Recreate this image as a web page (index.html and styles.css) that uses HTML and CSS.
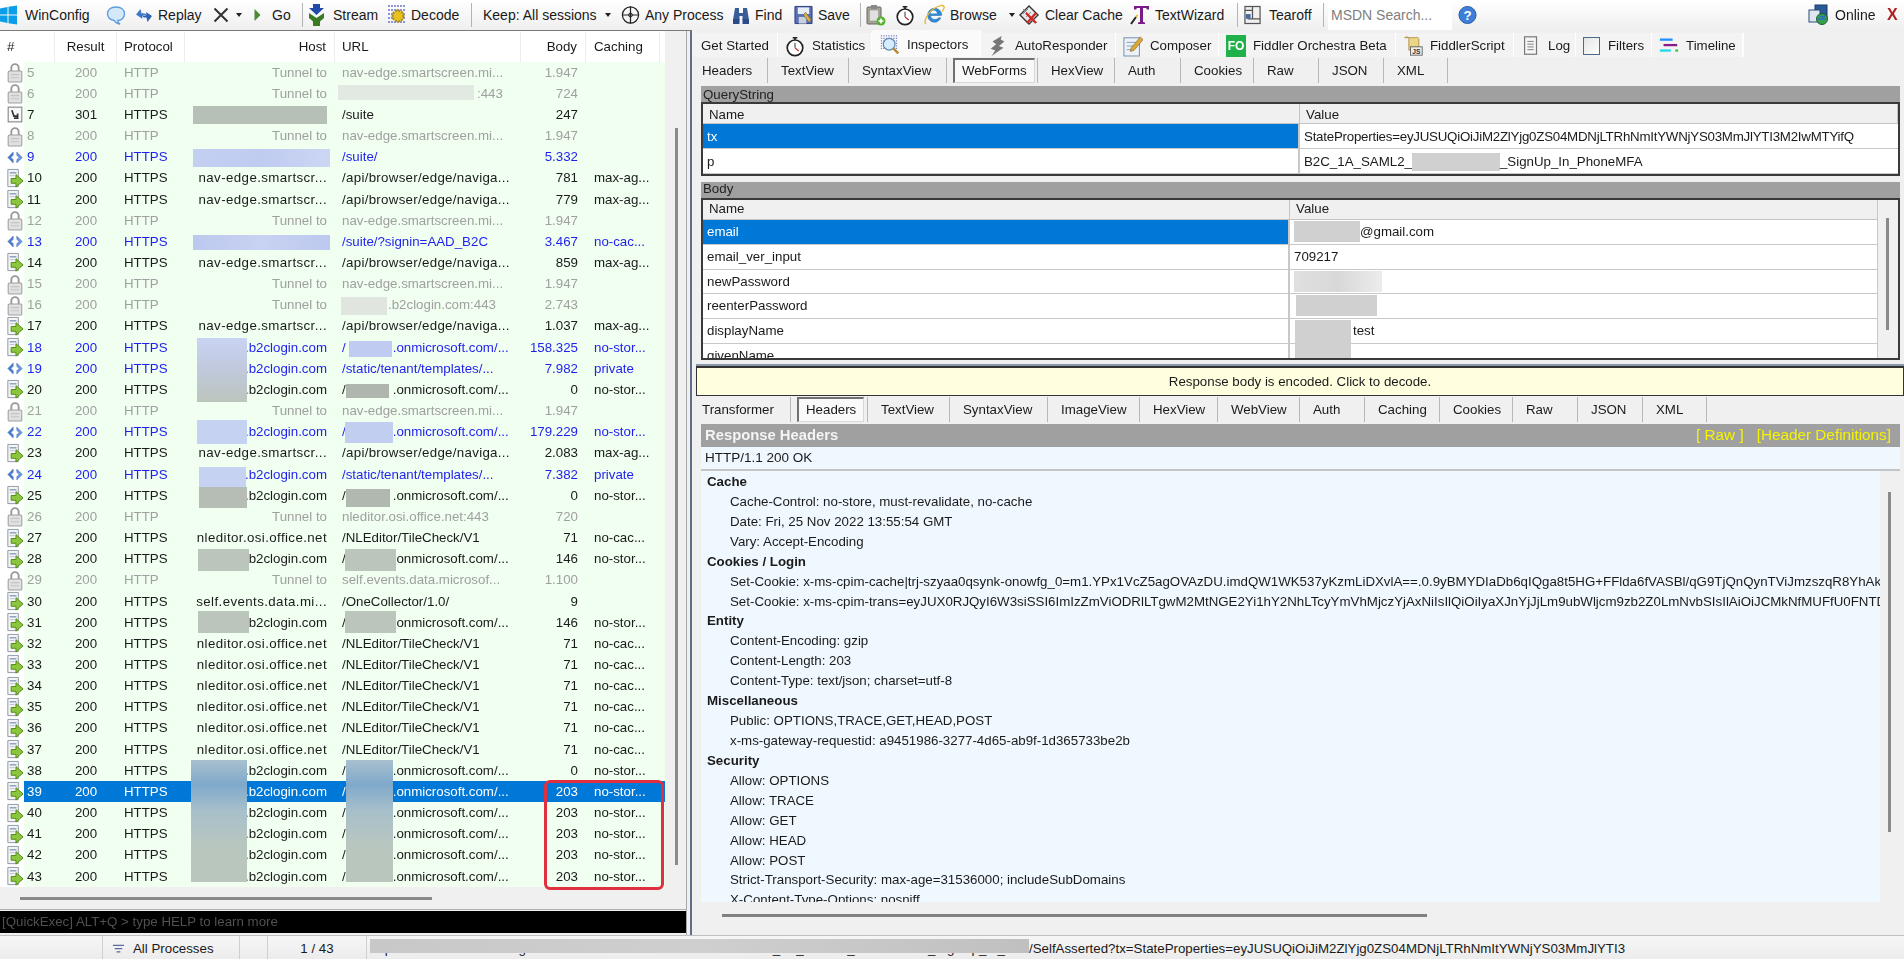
FILE: index.html
```html
<!DOCTYPE html>
<html lang="en">
<head>
<meta charset="utf-8">
<title>Fiddler</title>
<link rel="stylesheet" href="styles.css">
</head>
<body>
<svg class="defs" aria-hidden="true">
  <symbol id="lock" viewBox="0 0 16 20"><path d="M4.500 9V5.500a3.500 3.500 0 0 1 7 0V9" fill="none" stroke="#9a9a9a" stroke-width="1.800"/><rect x="1.500" y="8.500" width="13" height="10.500" rx="1" fill="#e0e0e0" stroke="#a0a0a0"/><path d="M4 12h8M4 15h8" stroke="#c4c4c4"/></symbol>
  <symbol id="js" viewBox="0 0 18 22"><path d="M1.500 1.500h11v18h-11z" fill="#f4f4f4" stroke="#8e98a4"/><path d="M3.500 5h7" stroke="#8aa0c0" stroke-width="1.500"/><path d="M3.500 8h5" stroke="#b8c0cc"/><path d="M5 11h5V7l7.500 6.500L10 20v-4H5z" fill="#8cc63f" stroke="#4f8a10"/></symbol>
  <symbol id="html" viewBox="0 0 20 14"><path d="M8 1 2 7l6 6V9.500L5.500 7 8 4.500z" fill="#4d7ed0" stroke="#2f5ca8" stroke-width=".5"/><path d="M12 1l6 6-6 6V9.500L14.500 7 12 4.500z" fill="#6d9ade" stroke="#2f5ca8" stroke-width=".5"/></symbol>
  <symbol id="redir" viewBox="0 0 16 20"><rect x="1.500" y="3" width="13" height="14" fill="#f8f8f8" stroke="#808080"/><path d="M5 6l2 5.500h3M10.500 9v4.500H7" fill="none" stroke="#333" stroke-width="1.600"/></symbol>
  <symbol id="timer" viewBox="0 0 20 24"><circle cx="10" cy="14" r="8.500" fill="#fff" stroke="#222" stroke-width="1.800"/><path d="M7.500 3h5M10 3v2.500" stroke="#222" stroke-width="1.800"/><path d="M10 14V8.500" stroke="#222"/><path d="M10 14l4 3.500" stroke="#d02020" stroke-width="1.300"/></symbol>
</svg>

<header class="toolbar">
  <div class="tool"><svg class="ic w17" viewBox="0 0 17 20"><path d="M0 3.500 7.500 2v7.500H0zM8.500 1.800 17 .5v9H8.500zM0 10.500h7.500V18L0 16.500zM8.500 10.500H17v9L8.500 18.200z" fill="#0a9ee8"/></svg><span>WinConfig</span></div>
  <div class="tool"><svg class="ic w20" viewBox="0 0 20 22"><path d="M10 3c5 0 8.500 2.700 8.500 6.800s-3.300 6.700-6.800 6.700c.3 1.600 1.300 2.800 2.300 3.500-2.800-.3-4.800-1.700-5.700-3.500C4.300 15.800 1.500 13.300 1.500 9.800 1.500 5.700 5 3 10 3z" fill="#d5e8fa" stroke="#5a9be0" stroke-width="1.300"/></svg></div>
  <div class="tool"><svg class="ic w18" viewBox="0 0 18 20"><path d="M1 9.500 5.500 4l1 4.500C9 8 11 8.500 12 10.500 10 9.800 8.500 10 7 11l.5 3z" fill="#3f78c8"/><path d="M17 11l-4.500 6-1-4.500C9 12.800 7.500 12 6.500 10.200c1.800.7 3.500.6 5-.4L11 7z" fill="#2c64b4"/></svg><span>Replay</span></div>
  <div class="tool"><svg class="ic w16" viewBox="0 0 16 18"><path d="M1.500 2.500l13 13M14.500 2.500l-13 13" stroke="#333" stroke-width="2"/></svg><i class="caret"></i></div>
  <div class="tool"><svg class="ic go" viewBox="0 0 7 14"><path d="M.5 1v12L6.500 7z" fill="#4c8a38"/></svg><span class="go-t">Go</span></div>
  <div class="tsep"></div>
  <div class="tool"><svg class="ic w17" viewBox="0 0 17 22"><path d="M5 0h7v4h4l-7.500 7L1 4h4z" fill="#1f4aa8"/><path d="M1 9l7.500 5 7.500-5v5l-4 3.500V22H5v-4.500L1 14z" fill="#3a7a22"/></svg><span>Stream</span></div>
  <div class="tool"><svg class="ic w19" viewBox="0 0 19 22"><path d="M1 2h17M1 6h17M1 10h17M1 14h17M1 18h17" stroke="#6a76c8" stroke-width="1.500" stroke-dasharray="2 1"/><circle cx="11" cy="12" r="5.500" fill="#e8c020" stroke="#a88a18" stroke-dasharray="2 1.200" stroke-width="2"/></svg><span>Decode</span></div>
  <div class="tsep"></div>
  <div class="tool keep"><span>Keep: All sessions</span><i class="caret"></i></div>
  <div class="tool"><svg class="ic w19" viewBox="0 0 20 20"><circle cx="10" cy="10" r="8.500" fill="none" stroke="#222" stroke-width="1.300"/><path d="M10 1v18M1 10h18" stroke="#222" stroke-width="1.300"/><circle cx="10" cy="10" r="2" fill="none" stroke="#222"/></svg><span>Any Process</span></div>
  <div class="tool"><svg class="ic w18" viewBox="0 0 18 20"><path d="M3 3h4v5h4V3h4l2 12h-6.500V11h-3v4H1z" fill="#3a5c98"/><rect x="1" y="14" width="6.500" height="5" fill="#2a4a88"/><rect x="10.500" y="14" width="6.500" height="5" fill="#2a4a88"/></svg><span>Find</span></div>
  <div class="tool"><svg class="ic w19" viewBox="0 0 20 20"><path d="M1 1h18v18H1z" fill="#5870b8" stroke="#2a3a7a"/><path d="M4 2h12v7H4z" fill="#e8ecf4"/><path d="M5 12h8v7H5z" fill="#c8cfdc"/><path d="m12 7 6 8-2 3-6-8z" fill="#d8b048" stroke="#5a4a20" stroke-width=".5"/></svg><span>Save</span></div>
  <div class="tsep"></div>
  <div class="tool"><svg class="ic w20" viewBox="0 0 20 22"><rect x="1" y="3" width="14" height="17" rx="1" fill="#a8a494" stroke="#666"/><rect x="3.500" y="6" width="9" height="11" fill="#e0e0e0" stroke="#888" stroke-width=".5"/><rect x="5" y="1" width="6" height="4" fill="#888"/><circle cx="15" cy="17" r="4.500" fill="#58b030"/><path d="M15 14.500v5M12.500 17h5" stroke="#fff" stroke-width="1.500"/></svg></div>
  <div class="tool"><svg class="ic w20"><use href="#timer"/></svg></div>
  <div class="tool"><svg class="ic w22" viewBox="0 0 22 22"><path d="M16.500 11.500H7.500c.2 2.500 2 4 4.500 4 1.600 0 2.800-.6 3.700-1.700h2c-1.200 2.800-3.500 4.500-6 4.500-4 0-7-3-7-7s3-7 7-7 7 3 7 7z" fill="#2c8ad8" stroke="#1a60a8" stroke-width=".5"/><path d="M7.500 9.500h6.500c-.3-2-1.500-3-3.200-3s-3 1.200-3.300 3" fill="#fff"/><path d="M3 20C0 18 5 8 12 4c4-2.500 8-3.500 9-1.500.6 1.300-.5 3.300-2 5" fill="none" stroke="#e8b830" stroke-width="1.400"/></svg><span>Browse</span><i class="caret browse-c"></i></div>
  <div class="tool"><svg class="ic w22" viewBox="0 0 22 22"><path d="M11 2 20 11 11 20 2 11z" fill="#e8e8e8" stroke="#333" stroke-width="1.400"/><path d="M5 5l14 14M5 10l5-5M8 13l5-5" stroke="#777" stroke-width=".8"/><path d="M8 9l10 10M18 9 9 19" stroke="#d02828" stroke-width="2.400"/></svg><span>Clear Cache</span></div>
  <div class="tool"><svg class="ic w20" viewBox="0 0 20 22"><path d="M4 2h15v3.500h-2L16 4h-3v14l2 .5V20H8v-1.500l2-.5V4H7L6 5.500H4z" fill="#7a1a88"/><path d="m1 20 5-7" stroke="#222" stroke-width="2"/><path d="m6 13 1.500-2" stroke="#e8c020" stroke-width="2"/></svg><span>TextWizard</span></div>
  <div class="tsep"></div>
  <div class="tool"><svg class="ic w17" viewBox="0 0 18 20"><rect x="1" y="1" width="16" height="18" fill="#f0f0f0" stroke="#555" stroke-width="1.300"/><path d="M1 5h8M9 1v13M4 14h13" stroke="#555" stroke-width="1.300"/><rect x="2" y="9" width="5" height="5" fill="#4a6aa0"/></svg><span>Tearoff</span></div>
  <div class="tsep"></div>
  <div class="msdn">MSDN Search...</div>
  <div class="tool"><svg class="ic w19" viewBox="0 0 20 20"><circle cx="10" cy="10" r="9" fill="#3d7fd8" stroke="#2458a8"/><text x="10" y="15" class="help-q">?</text></svg></div>
  <div class="tool"><svg class="ic w22" viewBox="0 0 22 22"><rect x="7" y="1" width="12" height="13" fill="#2a5a98" stroke="#1a3a68"/><rect x="1" y="6" width="11" height="12" fill="#dfe6f0" stroke="#2a4a78"/><circle cx="14" cy="15" r="5.500" fill="#38a048" stroke="#206030"/><path d="M12 12c2 1 4 1 5 0M10 15h8" stroke="#2c6cd0" stroke-width="1.400"/></svg><span>Online</span></div>
  <div class="close">X</div>
</header>

<main class="main">
  <section class="left">
    <div class="thead">
      <span>#</span><span class="c-r">Result</span><span>Protocol</span><span class="c-h">Host</span><span class="c-u">URL</span><span class="c-b">Body</span><span class="c-c">Caching</span>
    </div>
    <div class="list">
      <div class="row gray"><svg class="ri"><use href="#lock"/></svg><span>5</span><span class="c-r">200</span><span>HTTP</span><span class="c-h">Tunnel to</span><span class="c-u">nav-edge.smartscreen.mi...</span><span class="c-b">1.947</span><span class="c-c"></span></div>
      <div class="row gray"><svg class="ri"><use href="#lock"/></svg><span>6</span><span class="c-r">200</span><span>HTTP</span><span class="c-h">Tunnel to</span><span class="c-u"><i class="g136"></i>:443</span><span class="c-b">724</span><span class="c-c"></span></div>
      <div class="row"><svg class="ri"><use href="#redir"/></svg><span>7</span><span class="c-r">301</span><span>HTTPS</span><span class="c-h">:</span><span class="c-u">/suite</span><span class="c-b">247</span><span class="c-c"></span></div>
      <div class="row gray"><svg class="ri"><use href="#lock"/></svg><span>8</span><span class="c-r">200</span><span>HTTP</span><span class="c-h">Tunnel to</span><span class="c-u">nav-edge.smartscreen.mi...</span><span class="c-b">1.947</span><span class="c-c"></span></div>
      <div class="row blue"><svg class="ri"><use href="#html"/></svg><span>9</span><span class="c-r">200</span><span>HTTPS</span><span class="c-h"></span><span class="c-u">/suite/</span><span class="c-b">5.332</span><span class="c-c"></span></div>
      <div class="row"><svg class="ri"><use href="#js"/></svg><span>10</span><span class="c-r">200</span><span>HTTPS</span><span class="c-h wh">nav-edge.smartscr...</span><span class="c-u wu">/api/browser/edge/naviga...</span><span class="c-b">781</span><span class="c-c">max-ag...</span></div>
      <div class="row"><svg class="ri"><use href="#js"/></svg><span>11</span><span class="c-r">200</span><span>HTTPS</span><span class="c-h wh">nav-edge.smartscr...</span><span class="c-u wu">/api/browser/edge/naviga...</span><span class="c-b">779</span><span class="c-c">max-ag...</span></div>
      <div class="row gray"><svg class="ri"><use href="#lock"/></svg><span>12</span><span class="c-r">200</span><span>HTTP</span><span class="c-h">Tunnel to</span><span class="c-u">nav-edge.smartscreen.mi...</span><span class="c-b">1.947</span><span class="c-c"></span></div>
      <div class="row blue"><svg class="ri"><use href="#html"/></svg><span>13</span><span class="c-r">200</span><span>HTTPS</span><span class="c-h"></span><span class="c-u">/suite/?signin=AAD_B2C</span><span class="c-b">3.467</span><span class="c-c">no-cac...</span></div>
      <div class="row"><svg class="ri"><use href="#js"/></svg><span>14</span><span class="c-r">200</span><span>HTTPS</span><span class="c-h wh">nav-edge.smartscr...</span><span class="c-u wu">/api/browser/edge/naviga...</span><span class="c-b">859</span><span class="c-c">max-ag...</span></div>
      <div class="row gray"><svg class="ri"><use href="#lock"/></svg><span>15</span><span class="c-r">200</span><span>HTTP</span><span class="c-h">Tunnel to</span><span class="c-u">nav-edge.smartscreen.mi...</span><span class="c-b">1.947</span><span class="c-c"></span></div>
      <div class="row gray"><svg class="ri"><use href="#lock"/></svg><span>16</span><span class="c-r">200</span><span>HTTP</span><span class="c-h">Tunnel to</span><span class="c-u"><i class="g46"></i>.b2clogin.com:443</span><span class="c-b">2.743</span><span class="c-c"></span></div>
      <div class="row"><svg class="ri"><use href="#js"/></svg><span>17</span><span class="c-r">200</span><span>HTTPS</span><span class="c-h wh">nav-edge.smartscr...</span><span class="c-u wu">/api/browser/edge/naviga...</span><span class="c-b">1.037</span><span class="c-c">max-ag...</span></div>
      <div class="row blue"><svg class="ri"><use href="#js"/></svg><span>18</span><span class="c-r">200</span><span>HTTPS</span><span class="c-h">.b2clogin.com</span><span class="c-u">/<i class="g47"></i>.onmicrosoft.com/...</span><span class="c-b">158.325</span><span class="c-c">no-stor...</span></div>
      <div class="row blue"><svg class="ri"><use href="#html"/></svg><span>19</span><span class="c-r">200</span><span>HTTPS</span><span class="c-h">.b2clogin.com</span><span class="c-u">/static/tenant/templates/...</span><span class="c-b">7.982</span><span class="c-c">private</span></div>
      <div class="row"><svg class="ri"><use href="#js"/></svg><span>20</span><span class="c-r">200</span><span>HTTPS</span><span class="c-h">.b2clogin.com</span><span class="c-u">/<i class="g47"></i>.onmicrosoft.com/...</span><span class="c-b">0</span><span class="c-c">no-stor...</span></div>
      <div class="row gray"><svg class="ri"><use href="#lock"/></svg><span>21</span><span class="c-r">200</span><span>HTTP</span><span class="c-h">Tunnel to</span><span class="c-u">nav-edge.smartscreen.mi...</span><span class="c-b">1.947</span><span class="c-c"></span></div>
      <div class="row blue"><svg class="ri"><use href="#html"/></svg><span>22</span><span class="c-r">200</span><span>HTTPS</span><span class="c-h">.b2clogin.com</span><span class="c-u">/<i class="g47"></i>.onmicrosoft.com/...</span><span class="c-b">179.229</span><span class="c-c">no-stor...</span></div>
      <div class="row"><svg class="ri"><use href="#js"/></svg><span>23</span><span class="c-r">200</span><span>HTTPS</span><span class="c-h wh">nav-edge.smartscr...</span><span class="c-u wu">/api/browser/edge/naviga...</span><span class="c-b">2.083</span><span class="c-c">max-ag...</span></div>
      <div class="row blue"><svg class="ri"><use href="#html"/></svg><span>24</span><span class="c-r">200</span><span>HTTPS</span><span class="c-h">.b2clogin.com</span><span class="c-u">/static/tenant/templates/...</span><span class="c-b">7.382</span><span class="c-c">private</span></div>
      <div class="row"><svg class="ri"><use href="#js"/></svg><span>25</span><span class="c-r">200</span><span>HTTPS</span><span class="c-h">.b2clogin.com</span><span class="c-u">/<i class="g47"></i>.onmicrosoft.com/...</span><span class="c-b">0</span><span class="c-c">no-stor...</span></div>
      <div class="row gray"><svg class="ri"><use href="#lock"/></svg><span>26</span><span class="c-r">200</span><span>HTTP</span><span class="c-h">Tunnel to</span><span class="c-u">nleditor.osi.office.net:443</span><span class="c-b">720</span><span class="c-c"></span></div>
      <div class="row"><svg class="ri"><use href="#js"/></svg><span>27</span><span class="c-r">200</span><span>HTTPS</span><span class="c-h wh">nleditor.osi.office.net</span><span class="c-u">/NLEditor/TileCheck/V1</span><span class="c-b">71</span><span class="c-c">no-cac...</span></div>
      <div class="row"><svg class="ri"><use href="#js"/></svg><span>28</span><span class="c-r">200</span><span>HTTPS</span><span class="c-h">.b2clogin.com</span><span class="c-u">/<i class="g47"></i>.onmicrosoft.com/...</span><span class="c-b">146</span><span class="c-c">no-stor...</span></div>
      <div class="row gray"><svg class="ri"><use href="#lock"/></svg><span>29</span><span class="c-r">200</span><span>HTTP</span><span class="c-h">Tunnel to</span><span class="c-u">self.events.data.microsof...</span><span class="c-b">1.100</span><span class="c-c"></span></div>
      <div class="row"><svg class="ri"><use href="#js"/></svg><span>30</span><span class="c-r">200</span><span>HTTPS</span><span class="c-h wh">self.events.data.mi...</span><span class="c-u">/OneCollector/1.0/</span><span class="c-b">9</span><span class="c-c"></span></div>
      <div class="row"><svg class="ri"><use href="#js"/></svg><span>31</span><span class="c-r">200</span><span>HTTPS</span><span class="c-h">.b2clogin.com</span><span class="c-u">/<i class="g47"></i>.onmicrosoft.com/...</span><span class="c-b">146</span><span class="c-c">no-stor...</span></div>
      <div class="row"><svg class="ri"><use href="#js"/></svg><span>32</span><span class="c-r">200</span><span>HTTPS</span><span class="c-h wh">nleditor.osi.office.net</span><span class="c-u">/NLEditor/TileCheck/V1</span><span class="c-b">71</span><span class="c-c">no-cac...</span></div>
      <div class="row"><svg class="ri"><use href="#js"/></svg><span>33</span><span class="c-r">200</span><span>HTTPS</span><span class="c-h wh">nleditor.osi.office.net</span><span class="c-u">/NLEditor/TileCheck/V1</span><span class="c-b">71</span><span class="c-c">no-cac...</span></div>
      <div class="row"><svg class="ri"><use href="#js"/></svg><span>34</span><span class="c-r">200</span><span>HTTPS</span><span class="c-h wh">nleditor.osi.office.net</span><span class="c-u">/NLEditor/TileCheck/V1</span><span class="c-b">71</span><span class="c-c">no-cac...</span></div>
      <div class="row"><svg class="ri"><use href="#js"/></svg><span>35</span><span class="c-r">200</span><span>HTTPS</span><span class="c-h wh">nleditor.osi.office.net</span><span class="c-u">/NLEditor/TileCheck/V1</span><span class="c-b">71</span><span class="c-c">no-cac...</span></div>
      <div class="row"><svg class="ri"><use href="#js"/></svg><span>36</span><span class="c-r">200</span><span>HTTPS</span><span class="c-h wh">nleditor.osi.office.net</span><span class="c-u">/NLEditor/TileCheck/V1</span><span class="c-b">71</span><span class="c-c">no-cac...</span></div>
      <div class="row"><svg class="ri"><use href="#js"/></svg><span>37</span><span class="c-r">200</span><span>HTTPS</span><span class="c-h wh">nleditor.osi.office.net</span><span class="c-u">/NLEditor/TileCheck/V1</span><span class="c-b">71</span><span class="c-c">no-cac...</span></div>
      <div class="row"><svg class="ri"><use href="#js"/></svg><span>38</span><span class="c-r">200</span><span>HTTPS</span><span class="c-h">.b2clogin.com</span><span class="c-u">/<i class="g47"></i>.onmicrosoft.com/...</span><span class="c-b">0</span><span class="c-c">no-stor...</span></div>
      <div class="row sel"><svg class="ri"><use href="#js"/></svg><span>39</span><span class="c-r">200</span><span>HTTPS</span><span class="c-h">.b2clogin.com</span><span class="c-u">/<i class="g47"></i>.onmicrosoft.com/...</span><span class="c-b">203</span><span class="c-c">no-stor...</span></div>
      <div class="row"><svg class="ri"><use href="#js"/></svg><span>40</span><span class="c-r">200</span><span>HTTPS</span><span class="c-h">.b2clogin.com</span><span class="c-u">/<i class="g47"></i>.onmicrosoft.com/...</span><span class="c-b">203</span><span class="c-c">no-stor...</span></div>
      <div class="row"><svg class="ri"><use href="#js"/></svg><span>41</span><span class="c-r">200</span><span>HTTPS</span><span class="c-h">.b2clogin.com</span><span class="c-u">/<i class="g47"></i>.onmicrosoft.com/...</span><span class="c-b">203</span><span class="c-c">no-stor...</span></div>
      <div class="row"><svg class="ri"><use href="#js"/></svg><span>42</span><span class="c-r">200</span><span>HTTPS</span><span class="c-h">.b2clogin.com</span><span class="c-u">/<i class="g47"></i>.onmicrosoft.com/...</span><span class="c-b">203</span><span class="c-c">no-stor...</span></div>
      <div class="row"><svg class="ri"><use href="#js"/></svg><span>43</span><span class="c-r">200</span><span>HTTPS</span><span class="c-h">.b2clogin.com</span><span class="c-u">/<i class="g47"></i>.onmicrosoft.com/...</span><span class="c-b">203</span><span class="c-c">no-stor...</span></div>

      <div class="rd ra"></div><div class="rd rb"></div><div class="rd rc"></div><div class="rd rd1"></div><div class="rd re"></div>
      <div class="rd rf"></div><div class="rd rg"></div><div class="rd rh"></div><div class="rd ri2"></div><div class="rd rj"></div>
      <div class="rd rk"></div><div class="rd rl"></div><div class="rd rm"></div><div class="rd rn"></div><div class="rd ro"></div>
      <div class="rd rp"></div><div class="rd rq"></div><div class="rd rr"></div><div class="rd rs"></div>
      <div class="vthumb"></div>
      <div class="redbox"></div>
    </div>
    <div class="lscroll"><div class="hthumb"></div></div>
    <div class="quick">[QuickExec] ALT+Q &gt; type HELP to learn more</div>
  </section>

  <section class="right">
    <nav class="tabs1">
      <div class="t1">Get Started</div>
      <div class="t1"><svg class="ti"><use href="#timer"/></svg>Statistics</div>
      <div class="t1 on"><svg class="ti" viewBox="0 0 24 26"><path d="M1 2h20M1 5h20M1 8h20M1 11h20M1 14h20M1 17h20" stroke="#7a84c8" stroke-width="1.300" stroke-dasharray="1.500 1.500"/><circle cx="11" cy="12" r="7" fill="#d4ecff" stroke="#6a8ab0" stroke-width="1.500"/><path d="m16 17 6 6" stroke="#b88a38" stroke-width="3"/></svg>Inspectors</div>
      <div class="t1"><svg class="ti" viewBox="0 0 20 24"><path d="M14 1 4 7l4 3-6 5 5 2-4 6 13-9-5-2 6-5-4-2z" fill="#777"/></svg>AutoResponder</div>
      <div class="t1"><svg class="ti" viewBox="0 0 22 24"><rect x="1" y="3" width="17" height="20" fill="#eef2f8" stroke="#6a86a8"/><path d="M4 8h10M4 12h7M4 16h6" stroke="#7a9ac0"/><path d="m8 18 1-4L19 2l3 3-10 12z" fill="#d8a838" stroke="#7a5a18" stroke-width=".6"/></svg>Composer</div>
      <div class="t1"><b class="fo">FO</b>Fiddler Orchestra Beta</div>
      <div class="t1"><svg class="ti" viewBox="0 0 24 24"><path d="M2 2c3-2 5 0 5 2v13h12V4c0-2-2-3-4-2H2z" fill="#ecd488" stroke="#a88a38"/><rect x="9" y="13" width="14" height="10" fill="#eee" stroke="#555"/><text x="16" y="21.500" class="js-t">JS</text></svg>FiddlerScript</div>
      <div class="t1"><svg class="ti" viewBox="0 0 18 24"><rect x="2" y="2" width="13" height="19" fill="#f6f6f6" stroke="#777" stroke-width="1.300"/><path d="M5 7h7M5 10h7M5 13h7M5 16h7" stroke="#777"/></svg>Log</div>
      <div class="t1"><i class="chk"></i>Filters</div>
      <div class="t1"><svg class="ti" viewBox="0 0 22 20"><path d="M1 3h14" stroke="#1e90ff" stroke-width="2.500"/><path d="M5 9h15" stroke="#8a1a88" stroke-width="2.500"/><path d="M1 15h12" stroke="#20d8e8" stroke-width="2.500"/><path d="M18 15h3" stroke="#30c830" stroke-width="2.500"/></svg>Timeline</div>
    </nav>
    <nav class="tabs2">
      <div class="t2">Headers</div><div class="t2">TextView</div><div class="t2">SyntaxView</div><div class="t2"><span class="press">WebForms</span></div><div class="t2">HexView</div><div class="t2">Auth</div><div class="t2">Cookies</div><div class="t2">Raw</div><div class="t2">JSON</div><div class="t2">XML</div>
    </nav>
    <div class="forms">
      <div class="bar">QueryString</div>
      <div class="kv kv-q">
        <div class="kh">Name</div><div class="kh">Value</div>
        <div class="kc kname ksel">tx</div><div class="kc tight">StateProperties=eyJUSUQiOiJiM2ZlYjg0ZS04MDNjLTRhNmItYWNjYS03MmJlYTI3M2IwMTYifQ</div>
        <div class="kc kname">p</div><div class="kc">B2C_1A_SAML2_<i class="blot b88"></i>_SignUp_In_PhoneMFA</div>
      </div>
      <div class="bar bar2">Body</div>
      <div class="kvwrap">
        <div class="kv kv-b">
          <div class="kh">Name</div><div class="kh">Value</div>
          <div class="kc kname ksel">email</div><div class="kc"><i class="blot b66"></i>@gmail.com</div>
          <div class="kc kname">email_ver_input</div><div class="kc">709217</div>
          <div class="kc kname">newPassword</div><div class="kc"><i class="blot b90"></i></div>
          <div class="kc kname">reenterPassword</div><div class="kc"><i class="blot b81"></i></div>
          <div class="kc kname">displayName</div><div class="kc"><i class="blot b56"></i>test</div>
          <div class="kc kname">givenName</div><div class="kc"><i class="blot b56"></i></div>
        </div>
        <div class="kvscroll"><div class="kvthumb"></div></div>
      </div>
    </div>
    <div class="hsplit"></div>
    <div class="yellow">Response body is encoded. Click to decode.</div>
    <nav class="tabs3">
      <div class="t2">Transformer</div><div class="t2"><span class="press">Headers</span></div><div class="t2">TextView</div><div class="t2">SyntaxView</div><div class="t2">ImageView</div><div class="t2">HexView</div><div class="t2">WebView</div><div class="t2">Auth</div><div class="t2">Caching</div><div class="t2">Cookies</div><div class="t2">Raw</div><div class="t2">JSON</div><div class="t2">XML</div>
    </nav>
    <div class="resp">
      <div class="resp-bar"><strong>Response Headers</strong><span class="links"><span>[ Raw ]</span><span>[Header Definitions]</span></span></div>
      <div class="http">HTTP/1.1 200 OK</div>
      <div class="treewrap">
        <div class="tree">
          <div class="g">Cache</div>
          <div class="h">Cache-Control: no-store, must-revalidate, no-cache</div>
          <div class="h">Date: Fri, 25 Nov 2022 13:55:54 GMT</div>
          <div class="h">Vary: Accept-Encoding</div>
          <div class="g">Cookies / Login</div>
          <div class="h">Set-Cookie: x-ms-cpim-cache|trj-szyaa0qsynk-onowfg_0=m1.YPx1VcZ5agOVAzDU.imdQW1WK537yKzmLiDXvlA==.0.9yBMYDIaDb6qIQga8t5HG+FFlda6fVASBl/qG9TjQnQynTViJmzszqR8YhAkyfQ</div>
          <div class="h">Set-Cookie: x-ms-cpim-trans=eyJUX0RJQyI6W3siSSI6ImIzZmViODRlLTgwM2MtNGE2Yi1hY2NhLTcyYmVhMjczYjAxNiIsIlQiOiIyaXJnYjJjLm9ubWljcm9zb2Z0LmNvbSIsIlAiOiJCMkNfMUFfU0FNTDJfU2lnblVw</div>
          <div class="g">Entity</div>
          <div class="h">Content-Encoding: gzip</div>
          <div class="h">Content-Length: 203</div>
          <div class="h">Content-Type: text/json; charset=utf-8</div>
          <div class="g">Miscellaneous</div>
          <div class="h">Public: OPTIONS,TRACE,GET,HEAD,POST</div>
          <div class="h">x-ms-gateway-requestid: a9451986-3277-4d65-ab9f-1d365733be2b</div>
          <div class="g">Security</div>
          <div class="h">Allow: OPTIONS</div>
          <div class="h">Allow: TRACE</div>
          <div class="h">Allow: GET</div>
          <div class="h">Allow: HEAD</div>
          <div class="h">Allow: POST</div>
          <div class="h">Strict-Transport-Security: max-age=31536000; includeSubDomains</div>
          <div class="h">X-Content-Type-Options: nosniff</div>
        </div>
        <div class="treescroll"><div class="treethumb"></div></div>
      </div>
      <div class="rscroll"><div class="rthumb"></div></div>
    </div>
  </section>
</main>

<footer class="status">
  <div class="s1"></div>
  <div class="s2"><svg class="funnel" viewBox="0 0 14 10"><path d="M1 1h12M3 4.500h8M5 8h4" stroke="#5a6a9a" stroke-width="1.300"/></svg>All Processes</div>
  <div class="s3"></div>
  <div class="s4">1 / 43</div>
  <div class="s5"><span class="url-hid"><span class="url-under">https://xxxxxxxxxxx.b2clogin.com/xxxxxxxxxxx.onmicrosoft.com/B2C_1A_SAML2_xxxxxxxxxxx_SignUp_In_PhoneMFA</span></span><span>/SelfAsserted?tx=StateProperties=eyJUSUQiOiJiM2ZlYjg0ZS04MDNjLTRhNmItYWNjYS03MmJlYTI3</span></div>
</footer>
</body>
</html>
```

FILE: styles.css
```css
* { box-sizing: border-box; }
html, body { margin: 0; padding: 0; }
body {
  width: 1904px; height: 959px; overflow: hidden;
  font: 13.3px/1.2 "Liberation Sans", Arial, sans-serif;
  color: #1a1a1a; background: #f0f0f0;
  display: flex; flex-direction: column;
  filter: blur(.35px);
}
.defs { position: absolute; width: 0; height: 0; }
i { font-style: normal; }

/* toolbar */
.toolbar {
  height: 30px; flex: none;
  display: grid; align-items: center;
  grid-template-columns: 106px 29px 78px 41px 48px 6px 79px 84px 12px 138px 111px 62px 66px 6px 29px 28px 95px 112px 107px 7px 79px 5px 130px 350px 79px 17px;
  background: linear-gradient(#ffffff, #efefef);
  font-size: 14px;
}
.tool { display: flex; align-items: center; gap: 5px; height: 30px; white-space: nowrap; }
.ic { flex: none; height: 22px; }
.w16 { width: 16px; } .w17 { width: 17px; } .w18 { width: 18px; } .w19 { width: 19px; } .w20 { width: 20px; } .w22 { width: 22px; }
.w17 + span { margin-left: 3px; }
.go { width: 7px; height: 14px; }
.go-t { margin-left: 6px; }
.caret { width: 0; height: 0; border: 3.5px solid transparent; border-top: 4px solid #222; border-bottom: 0; margin-left: 2px; }
.browse-c { margin-left: 7px; }
.tsep { width: 1px; height: 24px; background: #b4b4b4; }
.keep { gap: 6px; }
.msdn { height: 29px; width: 124px; background: #fff; color: #808080; line-height: 28px; padding-left: 3px; }
.close { color: #b02020; font-weight: 700; font-size: 16px; }
.help-q { font: 700 14px "Liberation Sans", sans-serif; fill: #fff; text-anchor: middle; }
.js-t { font: 700 8px "Liberation Sans", sans-serif; fill: #333; text-anchor: middle; }

/* main columns */
.main { flex: none; height: 905px; display: flex; }
.left {
  width: 692px; flex: none; display: flex; flex-direction: column;
  border-right: 2px solid #5f6f8a; border-top: 1px solid #7a7a7a;
  box-shadow: inset -3px 0 0 #f0f0f0, inset -4px 0 0 #a8a8a8;
}
.thead, .row {
  display: grid;
  grid-template-columns: 24px 31px 62px 68px 150px 186px 65px 74px;
  align-items: center;
  white-space: nowrap;
}
.thead { height: 31px; padding-top: 1px; background: #fff; width: 665px; }
.thead > span { height: 100%; display: flex; align-items: center; border-right: 1px solid #ececec; }
.thead > span:first-child { grid-column: 1 / 3; padding-left: 7px; }
.thead .c-r { justify-content: center; }
.thead > span:nth-child(3) { padding-left: 7px; }
.thead .c-h { justify-content: flex-end; padding-right: 8px; }
.thead .c-u { padding-left: 7px; }
.thead .c-b { justify-content: flex-end; padding-right: 8px; }
.thead .c-c { padding-left: 8px; }
.list { position: relative; height: 825px; flex: none; }
.row {
  height: 21.16px; width: 665px;
  background: linear-gradient(90deg, #fff 24px, #f0fff0 24px);
}
.ri { width: 18px; height: 21px; margin-left: 6px; }
.row > span:nth-child(2) { padding-left: 3px; }
.row .c-r { text-align: center; }
.row > span:nth-child(4) { padding-left: 7px; }
.row .c-h { text-align: right; padding-right: 8px; }
.row .c-u { padding-left: 7px; }
.row .c-b { text-align: right; padding-right: 8px; }
.row .c-c { padding-left: 8px; }
.row .wh { letter-spacing: .4px; }
.row .wu { letter-spacing: .3px; }
.gray { color: #a0a0a0; }
.blue { color: #1f1fee; }
.sel { background: linear-gradient(90deg, #fff 24px, #0078d7 24px); color: #fff; }
.g136 { display: inline-block; width: 135px; }
.g46 { display: inline-block; width: 46px; }
.g47 { display: inline-block; width: 47px; }

/* blurred redactions */
.rd { position: absolute; }
.ra { left: 338px; top: 23px; width: 136px; height: 15px; background: #e2e8e2; }
.rb { left: 193px; top: 44px; width: 134px; height: 18px; background: #b6c0b6; }
.rc { left: 193px; top: 87px; width: 137px; height: 18px; background: linear-gradient(90deg, #c4d0f2, #bfcbf0, #ccd6f4); }
.rd1 { left: 193px; top: 173px; width: 137px; height: 15px; background: linear-gradient(90deg, #bcc8ee, #c8d2f2, #bcc8ee); }
.re { left: 341px; top: 235px; width: 46px; height: 18px; background: #e0e5e0; }
.rf { left: 197px; top: 276px; width: 50px; height: 64px; background: linear-gradient(#c9d4f4, #c0c8dc, #bcc5bc); }
.rg { left: 349px; top: 279px; width: 43px; height: 16px; background: #bfcbf0; }
.rh { left: 346px; top: 322px; width: 43px; height: 14px; background: #aeb6ae; }
.ri2 { left: 197px; top: 358px; width: 50px; height: 24px; background: #c6d2f2; }
.rj { left: 345px; top: 360px; width: 48px; height: 21px; background: #c2cef0; }
.rk { left: 199px; top: 405px; width: 47px; height: 21px; background: #c6d2f2; }
.rl { left: 199px; top: 425px; width: 48px; height: 21px; background: #b5bdb5; }
.rm { left: 346px; top: 427px; width: 44px; height: 18px; background: #b0b8b0; }
.rn { left: 198px; top: 487px; width: 51px; height: 22px; background: #bcc5bc; }
.ro { left: 345px; top: 487px; width: 51px; height: 22px; background: #bcc5bc; }
.rp { left: 198px; top: 549px; width: 51px; height: 22px; background: #bcc5bc; }
.rq { left: 345px; top: 549px; width: 51px; height: 22px; background: #bcc5bc; }
.rr, .rs { top: 698px; height: 122px; background: linear-gradient(#a9c0ce 0, #7fa9cb 20%, #a7c0ca 42%, #b9c6bf 70%, #bac6bc 100%); }
.rr { left: 191px; width: 56px; }
.rs { left: 346px; width: 47px; }
.vthumb { position: absolute; left: 675px; top: 66px; width: 3px; height: 737px; background: #8a8a8a; }
.redbox { position: absolute; left: 544px; top: 718px; width: 120px; height: 110px; border: 3.5px solid #e0303f; border-radius: 6px; }

.lscroll { height: 23px; flex: none; display: flex; align-items: center; width: 687px; border-bottom: 1px solid #b0b0b0; }
.hthumb { width: 412px; height: 3px; margin-left: 20px; background: #8a8a8a; }
.quick { height: 22px; width: 686px; flex: none; background: #000; color: #505050; padding: 3px 0 0 2px; margin-top: 1px; }

/* right */
.right { flex: 1; min-width: 0; display: flex; flex-direction: column; }
.tabs1 {
  margin-top: 3px; height: 24px; flex: none; white-space: nowrap;
  display: grid; grid-template-columns: 86px 94px 109px 135px 103px 177px 118px 62px 76px 91px;
  background: #fbfbfb;
  width: 1052px;
}
.t1 { display: flex; align-items: center; gap: 7px; padding: 2px 0 0 7px; background: #f3f3f3; border-right: 1px solid #fff; }
.t1:first-child { padding-left: 9px; }
.t1.on { background: #fafafa; margin-top: -3px; padding-left: 8px; }
.ti { width: 20px; height: 22px; flex: none; }
.fo { width: 20px; height: 22px; background: #21b14b; color: #fff; font: 700 12px/22px "Liberation Sans", sans-serif; text-align: center; flex: none; }
.chk { width: 17px; height: 18px; border: 1px solid #4c6a8a; background: linear-gradient(135deg, #e4e4e4, #ffffff); flex: none; margin-right: 1px; }
.tabs2 {
  height: 25px; flex: none;
  display: grid; grid-template-columns: 76px 81px 98px 91px 77px 66px 73px 65px 65px 64px;
  width: 756px;
}
.tabs3 {
  height: 24px; flex: none;
  display: grid; grid-template-columns: 99px 77px 82px 98px 92px 78px 82px 65px 75px 73px 65px 65px 64px;
  width: 1015px;
}
.t2 { display: flex; align-items: center; padding-left: 13px; border-right: 1px solid #b8b8b8; margin: 1px 0; white-space: nowrap; }
.t2:first-child { padding-left: 10px; }
.press { padding: 3px 7px; margin-left: -7px; background: #f9f9f9; border: 1px solid #d8d8d8; border-top: 2px solid #707070; border-left: 2px solid #707070; }

.forms { padding: 4px 4px 0 9px; height: 277px; flex: none; }
.bar { height: 16px; background: #a0a0a0; color: #222; line-height: 17px; padding-left: 2px; overflow: hidden; }
.bar2 { margin-top: 6px; line-height: 14px; }
.kv { display: grid; overflow: hidden; border: 2px solid #3a3a3a; background: #fff; white-space: nowrap; }
.kv-q { grid-template-columns: 597px 1fr; grid-template-rows: 20px 25px 25px; height: 74px; }
.kv-b { grid-template-columns: 587px 1fr; grid-template-rows: 20px repeat(6, 24.800px); height: 162px; width: 1199px; }
.kvwrap { position: relative; }
.kvscroll { position: absolute; right: 2px; top: 2px; bottom: 2px; width: 21px; background: #f0f0f0; border-left: 1px solid #c8c8c8; }
.kvthumb { position: absolute; left: 8px; top: 18px; width: 3px; height: 112px; background: #8a8a8a; }
.kh { background: #f0f0f0; padding: 3px 0 0 6px; border-right: 1px solid #c4c4c4; border-bottom: 1px solid #c4c4c4; }
.kv-b .kh { padding-top: 1px; }
.kc { padding: 5px 0 0 4px; border-bottom: 1px solid #c8c8c8; }
.kv-b .kc { padding-top: 4px; }
.tight { letter-spacing: -.23px; }
.kname { border-right: 2px solid #c8c8c8; }
.ksel { background: #0078d7; color: #fff; }
.blot { display: inline-block; vertical-align: top; height: 21px; margin-top: -3px; background: #d0d0d0; }
.b88 { width: 88px; height: 18px; margin-top: -1px; }
.b66 { width: 66px; }
.b90 { width: 88px; background: linear-gradient(90deg, #e0e0e0, #d8d8d8, #ececec); }
.b81 { width: 81px; margin-left: 2px; }
.b56 { width: 56px; margin-left: 1px; height: 34px; margin-right: 2px; }

.hsplit { height: 7px; flex: none; margin: 2px 0 0 4px; background: linear-gradient(#f0f0f0 0, #f0f0f0 3px, #8a98a8 3px, #8a98a8 5px, #333 5px); }
.yellow { height: 28px; flex: none; margin-left: 4px; background: #ffffe0; border: 1px solid #333; border-top: 0; display: flex; align-items: center; justify-content: center; }
.resp { padding: 4px 4px 0 9px; display: flex; flex-direction: column; flex: 1; min-height: 0; }
.resp-bar { height: 23px; flex: none; background: #a0a0a0; display: flex; justify-content: space-between; align-items: center; padding: 0 9px 0 4px; }
.resp-bar strong { color: #f4f4f4; font-size: 14.8px; }
.links { display: flex; gap: 13px; color: #f4f400; font-size: 15.3px; }
.http { height: 24px; flex: none; background: #f0f8ff; padding: 3px 0 0 4px; font-size: 13.5px; border-bottom: 2px solid #c4c4c4; }
.treewrap { flex: none; height: 431px; display: flex; }
.tree { flex: 1; min-width: 0; background: #f0f8ff; overflow: hidden; white-space: nowrap; padding-top: 1px; }
.g, .h { height: 19.93px; line-height: 19.93px; }
.g { font-weight: 700; padding-left: 6px; }
.h { padding-left: 29px; }
.treescroll { width: 20px; flex: none; position: relative; }
.treethumb { position: absolute; left: 8px; top: 21px; width: 3px; height: 340px; background: #8a8a8a; }
.rscroll { height: 26px; flex: none; display: flex; align-items: center; }
.rthumb { width: 705px; height: 3px; margin-left: 21px; background: #808080; }

/* status */
.status { flex: 1; display: flex; align-items: center; background: linear-gradient(#f6f6f6, #ececec); border-top: 1px solid #c0c0c0; white-space: nowrap; overflow: hidden; }
.s1, .s2, .s3, .s4 { height: 100%; border-right: 1px solid #d0d0d0; display: flex; align-items: center; flex: none; padding-top: 3px; }
.s1 { width: 103px; }
.s2 { width: 137px; padding-left: 9px; gap: 8px; }
.s3 { width: 28px; }
.s4 { width: 99px; justify-content: center; }
.funnel { width: 13px; height: 10px; }
.s5 { padding: 3px 0 0 3px; display: flex; align-items: center; height: 100%; flex: 1; min-width: 0; }
.url-hid { width: 659px; height: 100%; flex: none; position: relative; overflow: hidden; display: flex; align-items: center; }
.url-hid::after { content: ""; position: absolute; left: 0; right: 0; top: -3px; height: 17px; background: linear-gradient(90deg, #c8c8c8, #cfcfcf, #c0c0c0); }
.url-under { white-space: nowrap; }
```
